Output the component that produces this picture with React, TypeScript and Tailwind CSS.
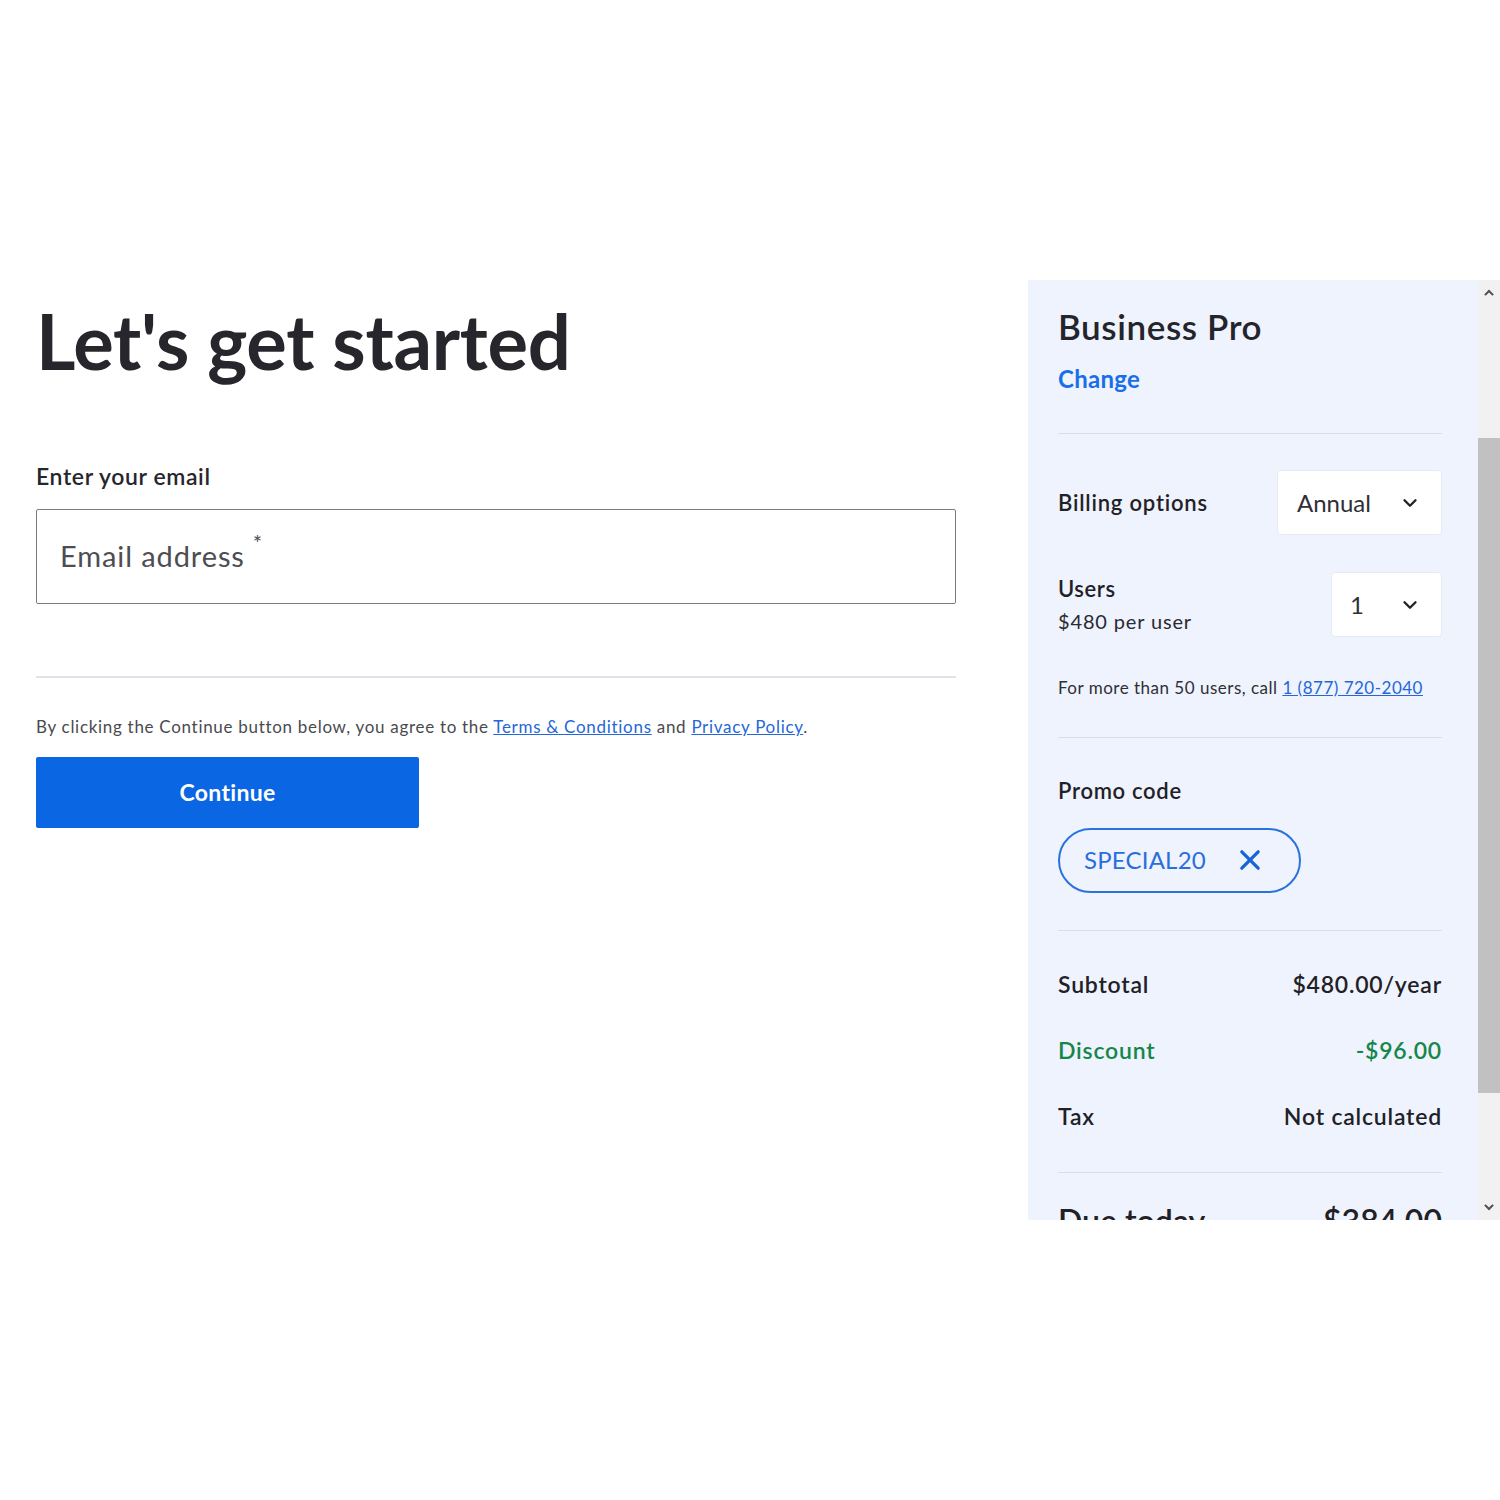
import React from 'react';

const font = { fontFamily: 'Lato, "Noto Sans", sans-serif' };

const Chevron: React.FC<{ className?: string }> = ({ className }) => (
  <svg viewBox="0 0 24 24" className={className} fill="none" stroke="currentColor" strokeWidth={2.6} strokeLinecap="round" strokeLinejoin="round">
    <path d="M6 9l6 6 6-6" />
  </svg>
);

const Divider = () => <div className="h-px bg-[#d9dee8]" />;

const Row: React.FC<{ label: string; value: string; green?: boolean }> = ({ label, value, green }) => (
  <div className={`flex justify-between items-center h-[66px] text-[23px] font-semibold tracking-[0.8px] ${green ? 'text-[#16864a]' : 'text-[#1f2127]'}`}>
    <span>{label}</span>
    <span>{value}</span>
  </div>
);

export default function App() {
  return (
    <div className="min-h-[1500px] bg-white pt-[280px]" style={font}>
      <div className="flex h-[940px]">
        {/* left: email form */}
        <div className="w-[1028px] pl-[36px] pr-[72px] pt-[23px]">
          <h1 className="text-[76px] leading-[76px] font-bold text-[#27262d] tracking-[-0.3px]">Let's get started</h1>
          <p className="mt-[80px] text-[23px] font-semibold text-[#27262d] tracking-[0.6px]">Enter your email</p>
          <div className="mt-[15px] h-[95px] border-[1.5px] border-[#7c7c7c] rounded-[2px] flex items-center px-[23px]">
            <span className="text-[29px] text-[#4d4d52] tracking-[0.9px]">Email address</span>
            <span className="text-[22px] text-[#4d4d52] self-start mt-[16px] ml-[8px]">*</span>
          </div>
          <div className="mt-[72px] h-[2px] bg-[#dfe2e8]" />
          <p className="mt-[36px] text-[17px] text-[#4a4a50] tracking-[0.7px]">
            By clicking the Continue button below, you agree to the{' '}
            <a className="text-[#2567d8] underline">Terms &amp; Conditions</a> and{' '}
            <a className="text-[#2567d8] underline">Privacy Policy</a>.
          </p>
          <button className="mt-[18px] w-[383px] h-[71px] bg-[#0b66e4] rounded-[2px] text-white text-[23px] font-bold tracking-[0.3px]">Continue</button>
        </div>

        {/* right: order summary */}
        <div className="flex flex-1 bg-[#eef3fd] overflow-hidden">
          <div className="flex-1 pl-[30px] pr-[36px] pt-[24px]">
            <h2 className="text-[35px] font-semibold text-[#24242b] leading-[44px] tracking-[0.6px]">Business Pro</h2>
            <a className="block mt-[13px] text-[24px] font-bold text-[#1a6fe8] tracking-[0.3px]">Change</a>
            <div className="mt-[36px]"><Divider /></div>

            <div className="flex items-center justify-between mt-[36px]">
              <span className="text-[22px] font-semibold text-[#1f2127] tracking-[0.8px]">Billing options</span>
              <div className="w-[165px] h-[65px] bg-white rounded-[4px] border border-[#e6eaf2] flex items-center justify-between pl-[19px] pr-[20px]">
                <span className="text-[24px] text-[#2f2f35]">Annual</span>
                <Chevron className="w-[22px] h-[22px] text-[#222]" />
              </div>
            </div>

            <div className="flex items-center justify-between mt-[37px]">
              <div>
                <p className="text-[22px] font-semibold text-[#1f2127] leading-[30px] tracking-[0.6px]">Users</p>
                <p className="text-[20px] text-[#2a2a30] leading-[30px] mt-[2px] tracking-[0.85px]">$480 per user</p>
              </div>
              <div className="w-[111px] h-[65px] bg-white rounded-[4px] border border-[#e6eaf2] flex items-center justify-between pl-[18px] pr-[20px]">
                <span className="text-[24px] text-[#2f2f35]">1</span>
                <Chevron className="w-[22px] h-[22px] text-[#222]" />
              </div>
            </div>

            <p className="mt-[38px] text-[17px] text-[#2f2f35] tracking-[0.5px]">
              For more than 50 users, call <a className="text-[#2567d8] underline">1 (877) 720-2040</a>
            </p>
            <div className="mt-[36px]"><Divider /></div>

            <p className="mt-[36px] text-[22px] font-semibold text-[#1f2127] tracking-[0.7px]">Promo code</p>
            <div className="mt-[21px] w-[243px] h-[65px] rounded-full border-2 border-[#2a72dc] flex items-center pl-[24px] gap-[30px]">
              <span className="text-[24px] text-[#2a6ede] tracking-[0.2px]">SPECIAL20</span>
              <svg viewBox="0 0 24 24" className="w-[28px] h-[28px] text-[#1565d8]" fill="none" stroke="currentColor" strokeWidth={2.8} strokeLinecap="round">
                <path d="M5 5l14 14M19 5L5 19" />
              </svg>
            </div>
            <div className="mt-[37px]"><Divider /></div>

            <div className="mt-[21px]">
              <Row label="Subtotal" value="$480.00/year" />
              <Row label="Discount" value="-$96.00" green />
              <Row label="Tax" value="Not calculated" />
            </div>
            <div className="mt-[22px]"><Divider /></div>
            <div className="mt-[24px] flex justify-between text-[32px] font-semibold text-[#1f2127]">
              <span>Due today</span>
              <span>$384.00</span>
            </div>
          </div>

          {/* scrollbar */}
          <div className="w-[22px] bg-[#f1f1f1] flex flex-col items-center">
            <svg viewBox="0 0 10 10" className="w-[12px] h-[12px] mt-[6px] text-[#505050]" fill="currentColor">
              <path d="M1 7l4-4 4 4-1.2 1.2L5 5.4 2.2 8.2z" />
            </svg>
            <div className="mt-[140px] w-full h-[655px] bg-[#c1c1c1]" />
            <div className="flex-1" />
            <svg viewBox="0 0 10 10" className="w-[12px] h-[12px] mb-[6px] text-[#505050]" fill="currentColor">
              <path d="M1 3l4 4 4-4-1.2-1.2L5 4.6 2.2 1.8z" />
            </svg>
          </div>
        </div>
      </div>
    </div>
  );
}
